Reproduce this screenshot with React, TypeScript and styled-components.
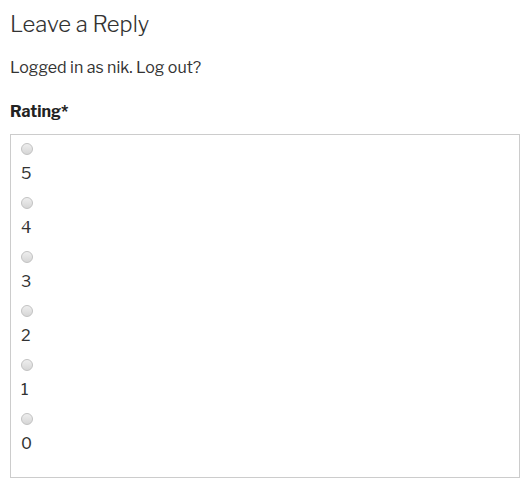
import styled, { createGlobalStyle } from "styled-components";

const GlobalStyle = createGlobalStyle`
	html, body {
		margin: 0;
		padding: 0;
		background: #fff;
	}

	body {
		font-family: "Libre Franklin", Lato, "Liberation Sans", sans-serif;
		color: #333;
	}
`;

const Page = styled.div`
	width: 510px;
	padding: 9px 10px 0;
`;

const ReplyTitle = styled.h3`
	margin: 0;
	font-size: 22px;
	font-weight: 300;
	line-height: 30px;
	color: #333;
`;

const LoggedIn = styled.p`
	margin: 17px 0 0;
	font-size: 16px;
	line-height: 24px;
`;

const FieldLabel = styled.label`
	display: block;
	margin-top: 20px;
	font-size: 16px;
	font-weight: 700;
	line-height: 24px;
	color: #222;
`;

const RatingBox = styled.fieldset`
	margin: 10px 0 0;
	padding: 8px 10px 21px;
	border: 1px solid #ccc;
	display: flex;
	flex-direction: column;
	gap: 11px;
`;

const Option = styled.label`
	display: flex;
	flex-direction: column;
	align-items: flex-start;
	gap: 7px;
`;

const Radio = styled.input.attrs({ type: "radio" })`
	appearance: none;
	margin: 0;
	width: 12px;
	height: 12px;
	border-radius: 50%;
	border: 1px solid #c2c2c2;
	background: linear-gradient(#eeeeee, #d6d6d6);
	box-sizing: border-box;
`;

const OptionValue = styled.span`
	font-size: 16px;
	line-height: 24px;
	color: #333;
`;

const ratings = [5, 4, 3, 2, 1, 0];

export default function App(): JSX.Element {
	return (
		<Page>
			<GlobalStyle />
			<ReplyTitle>Leave a Reply</ReplyTitle>
			<LoggedIn>Logged in as nik. Log out?</LoggedIn>
			<FieldLabel>Rating*</FieldLabel>
			<RatingBox>
				{ratings.map((value) =>
					<Option key={value}>
						<Radio name="rating" value={value} />
						<OptionValue>{value}</OptionValue>
					</Option>
				)}
			</RatingBox>
		</Page>
	);
}
